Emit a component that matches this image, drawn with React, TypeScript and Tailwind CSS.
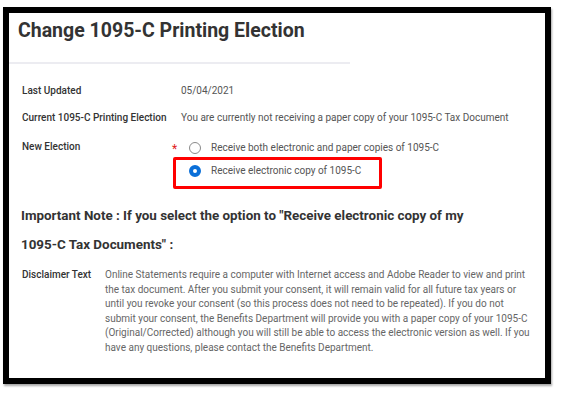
import React from "react";

export default function App() {
  return (
    <div className="w-[564px] h-[396px] bg-white pt-[7px] pl-[3px] font-['Roboto',sans-serif]">
      <div className="w-[548px] h-[377px] border-[6px] border-black bg-white shadow-[1px_2px_2px_rgba(0,0,0,0.35)]">
        <div className="pl-[9px] pt-[6px] text-[19.5px] leading-[24px] font-bold text-[#333]">
          Change 1095-C Printing Election
        </div>
        <div className="mt-[19px] h-[2px] w-[341px] bg-[#ececf1]" />
        <div className="pl-[13px]">
          <div className="mt-[20px] flex text-[10px] leading-[14px]">
            <div className="w-[159px] font-medium text-[#333]">Last Updated</div>
            <div className="text-[#555]">05/04/2021</div>
          </div>
          <div className="mt-[13px] flex text-[10px] leading-[14px]">
            <div className="w-[159px] font-medium text-[#333]">Current 1095-C Printing Election</div>
            <div className="text-[#555]">You are currently not receiving a paper copy of your 1095-C Tax Document</div>
          </div>
          <div className="mt-[15px] flex text-[10px] leading-[14px]">
            <div className="w-[150px] font-medium text-[#333]">New Election</div>
            <div className="flex flex-col">
              <div className="flex items-center">
                <span className="w-[17px] text-[#e0201c] text-[12px] leading-[14px] pt-[2px]">*</span>
                <span className="w-[12px] h-[12px] rounded-full border border-[#8a8a8a] bg-white" />
                <span className="ml-[10px] text-[#555]">Receive both electronic and paper copies of 1095-C</span>
              </div>
              <div className="mt-[1px] ml-[1px] w-[209px] h-[32px] border-[3px] border-[#ff0000] rounded-[2px] pl-[13px] pt-[4px] flex items-start">
                <div className="flex items-center">
                  <span className="w-[12px] h-[12px] rounded-full border-[4px] border-[#0a6fd8] bg-white" />
                  <span className="ml-[10px] text-[#555]">Receive electronic copy of 1095-C</span>
                </div>
              </div>
            </div>
          </div>
        </div>
        <div className="mt-[12px] pl-[12px] text-[13.4px] leading-[29px] font-bold text-[#333]">
          Important Note : If you select the option to "Receive electronic copy of my
          <br />
          1095-C Tax Documents" :
        </div>
        <div className="mt-[9px] pl-[13px] flex text-[10px] leading-[14.5px]">
          <div className="w-[83px] shrink-0 font-medium text-[#333]">Disclaimer Text</div>
          <div className="w-[428px] text-[#666]">
            Online Statements require a computer with Internet access and Adobe Reader to view and print the tax document. After you submit your consent, it will remain valid for all future tax years or until you revoke your consent (so this process does not need to be repeated). If you do not submit your consent, the Benefits Department will provide you with a paper copy of your 1095-C (Original/Corrected) although you will still be able to access the electronic version as well. If you have any questions, please contact the Benefits Department.
          </div>
        </div>
      </div>
    </div>
  );
}
